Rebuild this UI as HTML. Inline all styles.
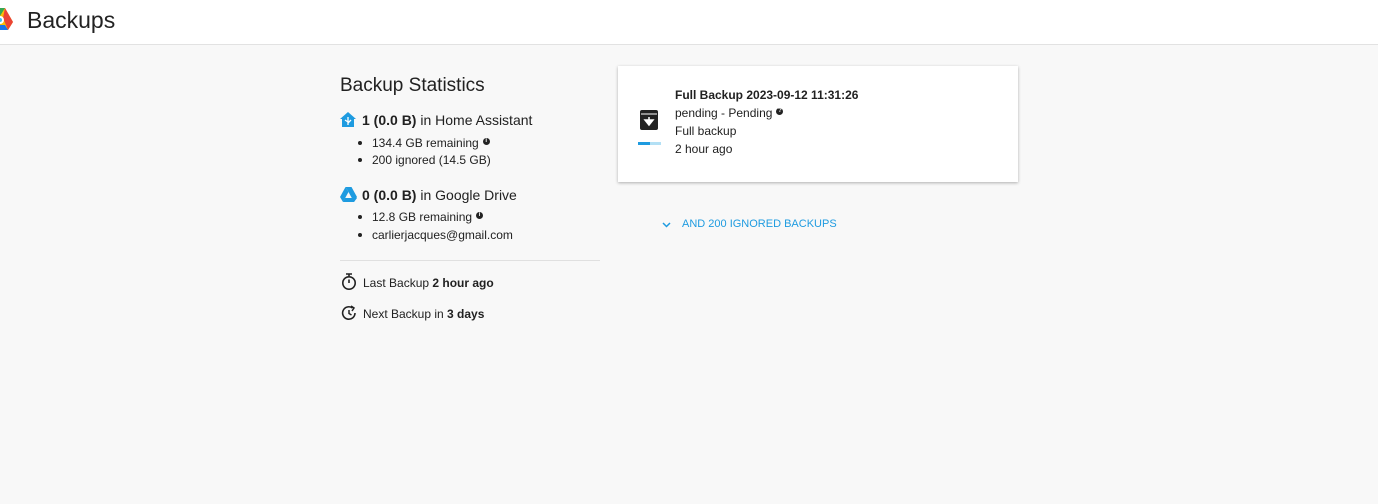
<!DOCTYPE html>
<html><head><style>
body{margin:0;width:1378px;height:504px;background:#f8f8f8;font-family:"Liberation Sans",sans-serif;color:#212121;position:relative;overflow:hidden}
.a{position:absolute;white-space:nowrap}
.hdr{position:absolute;left:0;top:0;width:1378px;height:44px;background:#fff;border-bottom:1px solid #e2e2e2}
.s{font-size:12px}
.dot{position:absolute;width:4px;height:4px;border-radius:50%;background:#222}
.card{position:absolute;left:618px;top:66px;width:400px;height:116px;background:#fff;box-shadow:0 1px 3px rgba(0,0,0,.3)}
.ic{display:inline-block;width:7px;height:7px;border-radius:50%;background:#222;color:#fff;font-size:6px;line-height:7px;text-align:center;vertical-align:5px;margin-left:4px;font-weight:bold}
</style></head><body>
<div class="hdr">
<svg class="a" style="left:-9px;top:8px" width="22" height="24" viewBox="0 0 22 24"><path d="M4 0 L14 0 L22 14 L17 22 L5 22 L0 14Z" fill="#fbbc04"/><path d="M0 14 L5 22 L17 22 L14 17 L3 17Z" fill="#1a73e8"/><path d="M4 0 L14 0 L9 8Z" fill="#34a853"/><path d="M14 0 L22 14 L17 22 L12 10Z" fill="#ea4335"/><circle cx="9" cy="12" r="4" fill="#fff"/><circle cx="9" cy="12" r="2" fill="#41bdf5"/></svg>
<div class="a" style="left:27px;top:7px;font-size:23px;color:#222">Backups</div>
</div>
<div class="a" style="left:340px;top:75px;font-size:19px">Backup Statistics</div>
<svg class="a" style="left:340px;top:112px" width="16" height="15" viewBox="0 0 16 15"><path d="M8 0 L16 7 L14 7 L14 15 L2 15 L2 7 L0 7Z" fill="#1e9be0"/><path d="M8 5 V13 M5 8 L8 10 M11 8 L8 11" stroke="#fff" stroke-width="1.3"/></svg>
<div class="a" style="left:362px;top:112px;font-size:14px"><b>1 (0.0 B)</b> in Home Assistant</div>
<div class="dot" style="left:358px;top:141px"></div><div class="a s" style="left:372px;top:136px">134.4 GB remaining<span class="ic">i</span></div>
<div class="dot" style="left:358px;top:158px"></div><div class="a s" style="left:372px;top:153px">200 ignored (14.5 GB)</div>
<svg class="a" style="left:340px;top:187px" width="17" height="15" viewBox="0 0 17 15"><path d="M5.5 0 H11.5 L17 10 L14 15 L8.5 5Z" fill="#1e9be0"/><path d="M5.5 0 L8.5 5 L3 15 L0 10Z" fill="#1e9be0"/><path d="M5 11 H17 L14 15 H3Z" fill="#1e9be0"/></svg>
<div class="a" style="left:362px;top:187px;font-size:14px"><b>0 (0.0 B)</b> in Google Drive</div>
<div class="dot" style="left:358px;top:215px"></div><div class="a s" style="left:372px;top:210px">12.8 GB remaining<span class="ic">i</span></div>
<div class="dot" style="left:358px;top:233px"></div><div class="a s" style="left:372px;top:228px">carlierjacques@gmail.com</div>
<div class="a" style="left:340px;top:260px;width:260px;height:1px;background:#e0e0e0"></div>
<svg class="a" style="left:341px;top:273px" width="16" height="17" viewBox="0 0 16 17"><path d="M5 1 H11 M8 1 V3" stroke="#222" stroke-width="1.6"/><circle cx="8" cy="10" r="6.2" fill="none" stroke="#222" stroke-width="1.6"/><path d="M8 10 V6.5" stroke="#222" stroke-width="1.6"/></svg>
<div class="a s" style="left:363px;top:276px">Last Backup <b>2 hour ago</b></div>
<svg class="a" style="left:341px;top:305px" width="16" height="16" viewBox="0 0 16 16"><path d="M14 8 A6.2 6.2 0 1 1 11.5 3" fill="none" stroke="#222" stroke-width="1.6"/><path d="M10 1 L13 3 L11 6" fill="none" stroke="#222" stroke-width="1.5"/><path d="M8 5 V8.5 L10.5 10" fill="none" stroke="#222" stroke-width="1.5"/></svg>
<div class="a s" style="left:363px;top:307px">Next Backup in <b>3 days</b></div>
<div class="card">
<svg class="a" style="left:22px;top:44px" width="18" height="20" viewBox="0 0 18 20"><rect x="0" y="0" width="18" height="20" rx="2" fill="#222"/><path d="M1 4 H17" stroke="#fff" stroke-width="1"/><path d="M9 7 V11 M5 10 L9 15 L13 10Z" fill="#fff" stroke="#fff" stroke-width="1.5"/></svg>
<div class="a" style="left:20px;top:76px;width:23px;height:3px;background:#b3e0f5"></div>
<div class="a" style="left:20px;top:76px;width:12px;height:3px;background:#1e9be0"></div>
<div class="a s" style="left:57px;top:22px;font-weight:bold">Full Backup 2023-09-12 11:31:26</div>
<div class="a s" style="left:57px;top:40px">pending - Pending<span class="ic">?</span></div>
<div class="a s" style="left:57px;top:58px">Full backup</div>
<div class="a s" style="left:57px;top:76px">2 hour ago</div>
</div>
<svg class="a" style="left:662px;top:222px" width="9" height="6" viewBox="0 0 9 6"><path d="M1 1 L4.5 4.5 L8 1" fill="none" stroke="#1e9be0" stroke-width="1.5"/></svg>
<div class="a" style="left:682px;top:218px;font-size:11px;color:#1e9be0">AND 200 IGNORED BACKUPS</div>
</body></html>
